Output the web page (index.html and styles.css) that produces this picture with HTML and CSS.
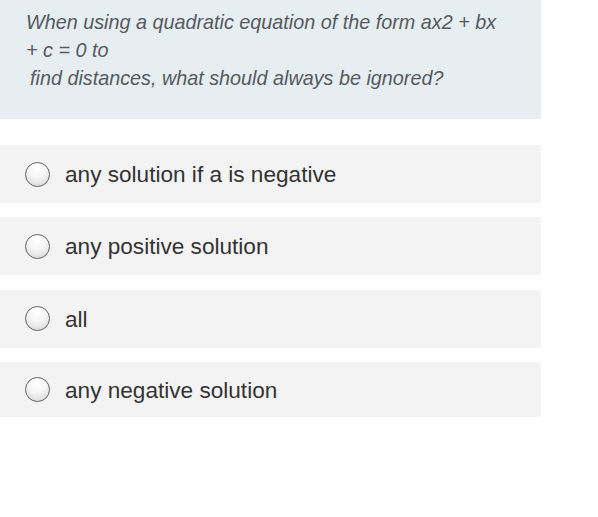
FILE: index.html
```html
<!DOCTYPE html>
<html>
<head>
<meta charset="utf-8">
<link rel="stylesheet" href="styles.css">
</head>
<body>
<div class="page">
  <div class="question">
    <p class="q-line">When using a quadratic equation of the form ax2 + bx</p>
    <p class="q-line">+ c = 0 to</p>
    <p class="q-line indent">find distances, what should always be ignored?</p>
  </div>
  <div class="options">
    <label class="option"><span class="radio"></span><span class="opt-text">any solution if a is negative</span></label>
    <label class="option"><span class="radio"></span><span class="opt-text">any positive solution</span></label>
    <label class="option"><span class="radio"></span><span class="opt-text">all</span></label>
    <label class="option last"><span class="radio"></span><span class="opt-text">any negative solution</span></label>
  </div>
</div>
</body>
</html>
```
FILE: styles.css
```css
html, body {
  margin: 0;
  padding: 0;
  background: #ffffff;
}
.page {
  width: 541px;
  font-family: "Liberation Sans", Arial, sans-serif;
}
.question {
  background: #e7eef2;
  height: 119px;
  box-sizing: border-box;
  padding: 8px 0 0 26px;
}
.q-line {
  margin: 0;
  font-style: italic;
  font-size: 19.8px;
  line-height: 28px;
  color: #555a5e;
}
.q-line.indent {
  padding-left: 4px;
}
.options {
  margin-top: 26px;
  display: flex;
  flex-direction: column;
  gap: 14.4px;
}
.option {
  display: flex;
  align-items: center;
  height: 58px;
  background: #f3f3f3;
  padding-left: 25px;
  box-sizing: border-box;
}
.option.last {
  height: 55px;
}
.radio {
  width: 25px;
  height: 25px;
  box-sizing: border-box;
  border-radius: 50%;
  border: 1.6px solid #636363;
  background: radial-gradient(circle at 50% 25%, #ffffff 0%, #f6f6f6 40%, #d6d6d6 100%);
  flex: none;
}
.opt-text {
  margin-left: 15px;
  padding-top: 2px;
  font-size: 22.6px;
  color: #333333;
}
```
